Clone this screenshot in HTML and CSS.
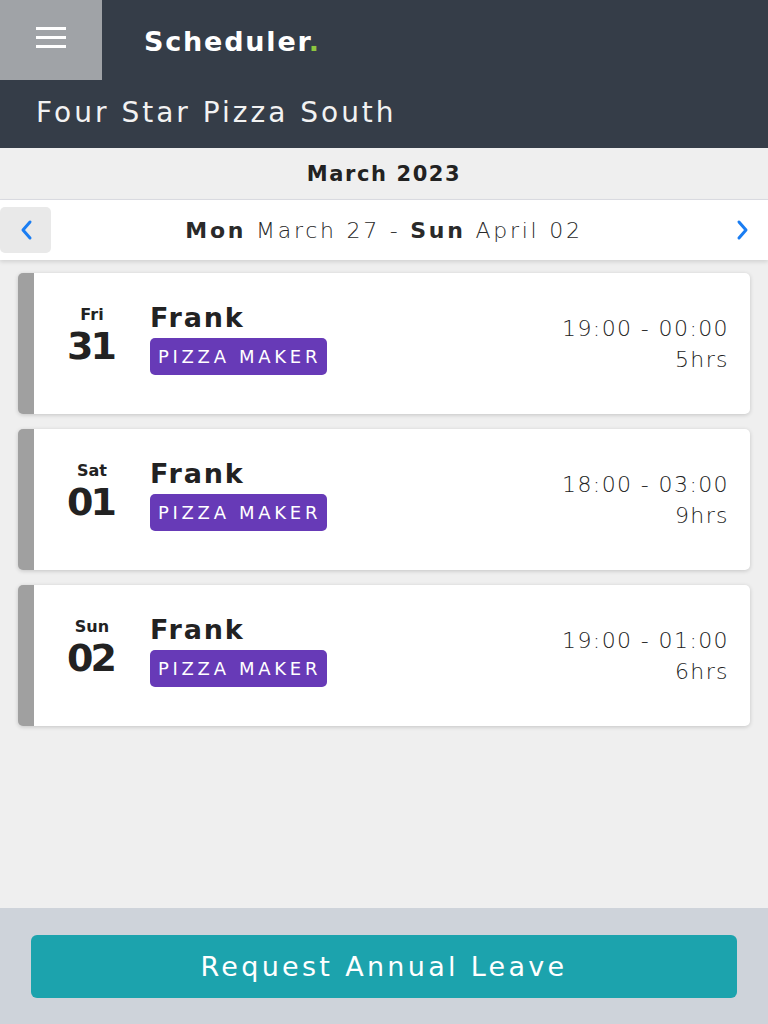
FILE: index.html
```html
<!DOCTYPE html>
<html lang="en">

<head>
    <meta charset="UTF-8">
    <meta name="viewport" content="width=device-width, initial-scale=1.0">
    <title>Scheduler</title>
    <link rel="stylesheet" href="styles.css">
</head>

<body>
    <div class="app">
        <header class="topbar">
            <div class="topbar-row">
                <button class="menu-btn" aria-label="Menu">
                    <svg width="30" height="22" viewBox="0 0 30 22">
                        <rect x="0" y="0" width="30" height="3" fill="#fff" />
                        <rect x="0" y="9" width="30" height="3" fill="#fff" />
                        <rect x="0" y="18" width="30" height="3" fill="#fff" />
                    </svg>
                </button>
                <div class="brand">Scheduler<span class="dot">.</span></div>
            </div>
            <div class="store">Four Star Pizza South</div>
        </header>

        <div class="month">March 2023</div>

        <div class="week">
            <button class="week-btn prev">
                <svg width="14" height="22" viewBox="0 0 14 22">
                    <path d="M11 3 L4 11 L11 19" fill="none" stroke="#1a7df2" stroke-width="3" stroke-linecap="round" stroke-linejoin="round" />
                </svg>
            </button>
            <div class="week-label"><b>Mon</b> March 27 - <b>Sun</b> April 02</div>
            <button class="week-btn next">
                <svg width="14" height="22" viewBox="0 0 14 22">
                    <path d="M3 3 L10 11 L3 19" fill="none" stroke="#1a7df2" stroke-width="3" stroke-linecap="round" stroke-linejoin="round" />
                </svg>
            </button>
        </div>

        <main class="shifts">
            <div class="shift">
                <div class="day">
                    <div class="day-name">Fri</div>
                    <div class="day-num">31</div>
                </div>
                <div class="who">
                    <div class="name">Frank</div>
                    <span class="role">PIZZA MAKER</span>
                </div>
                <div class="time">
                    <div>19:00 - 00:00</div>
                    <div>5hrs</div>
                </div>
            </div>
            <div class="shift">
                <div class="day">
                    <div class="day-name">Sat</div>
                    <div class="day-num">01</div>
                </div>
                <div class="who">
                    <div class="name">Frank</div>
                    <span class="role">PIZZA MAKER</span>
                </div>
                <div class="time">
                    <div>18:00 - 03:00</div>
                    <div>9hrs</div>
                </div>
            </div>
            <div class="shift">
                <div class="day">
                    <div class="day-name">Sun</div>
                    <div class="day-num">02</div>
                </div>
                <div class="who">
                    <div class="name">Frank</div>
                    <span class="role">PIZZA MAKER</span>
                </div>
                <div class="time">
                    <div>19:00 - 01:00</div>
                    <div>6hrs</div>
                </div>
            </div>
        </main>

        <footer class="footer">
            <button class="leave-btn">Request Annual Leave</button>
        </footer>
    </div>
</body>

</html>
```

FILE: styles.css
```css
* {
    box-sizing: border-box;
}

body {
    margin: 0;
    font-family: "DejaVu Sans", Arial, sans-serif;
    background-color: #efefef;
    color: #222;
}

.app {
    display: flex;
    flex-direction: column;
    height: 1024px;
}

.topbar {
    background-color: #353d48;
    color: #fff;
}

.topbar-row {
    display: flex;
    align-items: center;
    height: 80px;
}

.menu-btn {
    width: 102px;
    height: 80px;
    border: none;
    background-color: #a0a3a7;
    display: flex;
    justify-content: center;
    align-items: center;
    padding: 0 0 4px 0;
}

.brand {
    margin-left: 42px;
    margin-top: 3px;
    font-size: 27px;
    font-weight: bold;
    letter-spacing: 1.8px;
}

.brand .dot {
    color: #8dc63f;
}

.store {
    height: 68px;
    padding: 16px 0 0 36px;
    font-size: 28px;
    letter-spacing: 3px;
    color: #f2f2f2;
}

.month {
    height: 52px;
    display: flex;
    justify-content: center;
    align-items: center;
    font-size: 21px;
    font-weight: 600;
    letter-spacing: 1.6px;
    border-bottom: 1px solid #dcdde3;
}

.week {
    display: flex;
    align-items: center;
    height: 60px;
    background-color: #fff;
    box-shadow: 0 2px 4px rgba(0, 0, 0, 0.12);
}

.week-btn {
    width: 51px;
    height: 46px;
    border: none;
    background: none;
    display: flex;
    justify-content: center;
    align-items: center;
}

.week-btn.prev {
    background-color: #e9e9e9;
    border-radius: 5px;
}

.week-label {
    flex: 1;
    text-align: center;
    font-size: 22px;
    font-weight: 300;
    letter-spacing: 2.75px;
    color: #2a2a2a;
}

.week-label b {
    font-weight: bold;
}

.shifts {
    flex: 1;
    display: flex;
    flex-direction: column;
    gap: 15px;
    padding: 13px 18px;
}

.shift {
    display: flex;
    align-items: center;
    height: 141px;
    background-color: #fff;
    border-left: 16px solid #a0a0a0;
    border-radius: 5px;
    box-shadow: 0 1px 4px rgba(0, 0, 0, 0.18);
    padding-right: 22px;
}

.day {
    width: 116px;
    text-align: center;
    margin-top: -15px;
}

.day-name {
    font-size: 16px;
    font-weight: 600;
    line-height: 19px;
}

.day-num {
    font-size: 38px;
    font-weight: bold;
    line-height: 44px;
    letter-spacing: -3px;
    margin-right: 3px;
}

.who {
    flex: 1;
    margin-top: -10px;
}

.name {
    font-size: 27px;
    font-weight: 600;
    letter-spacing: 1.8px;
    margin-bottom: 5px;
}

.role {
    display: inline-block;
    background-color: #673ab7;
    color: #fff;
    font-size: 18px;
    padding: 8px 6px 8px 8px;
    border-radius: 5px;
    letter-spacing: 3.7px;
}

.time {
    text-align: right;
    font-size: 22px;
    font-weight: 300;
    line-height: 31px;
    letter-spacing: 1.4px;
    margin-right: -1px;
}

.footer {
    height: 116px;
    background-color: #ced3da;
    display: flex;
    align-items: center;
    padding: 0 31px;
}

.leave-btn {
    width: 100%;
    height: 63px;
    border: none;
    border-radius: 6px;
    background-color: #1ca3ad;
    color: #fff;
    font-family: inherit;
    font-size: 27px;
    letter-spacing: 3.3px;
}
```
